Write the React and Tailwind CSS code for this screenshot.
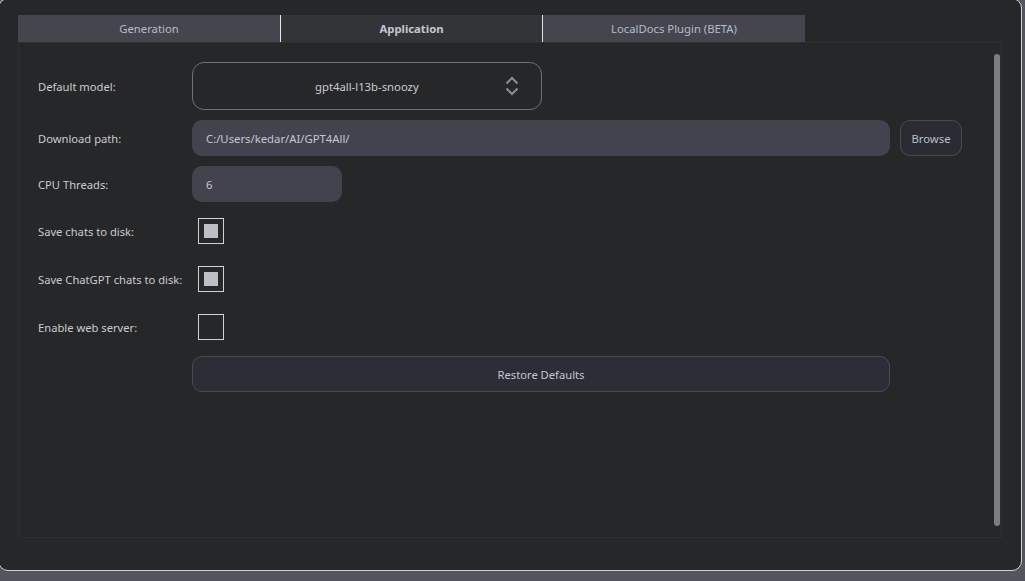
import React from 'react';

const Label = ({ children }) => (
  <div className="w-[154px] shrink-0 whitespace-nowrap pt-[2px] text-[11.2px] text-[#c9ccd1]">{children}</div>
);

const CheckRow = ({ label, checked }) => (
  <div className="flex h-[38px] items-center">
    <Label>{label}</Label>
    <div className="ml-[6px] flex h-[26px] w-[26px] items-center justify-center border border-[#d0d2d6]">
      {checked && <div className="h-[14px] w-[14px] bg-[#bcbfc6]" />}
    </div>
  </div>
);

const tabClass = 'flex h-[27px] items-center justify-center pt-[2px] text-[11.3px]';

const App = () => {
  return (
    <div className="h-[581px] w-[1025px] overflow-hidden bg-[#55555f] font-['Noto_Sans',sans-serif]">
      <div className="-ml-[2px] -mt-[2px] h-[573px] w-[1024px] rounded-[10px] border border-[#d0d2d6] bg-[#262729] pl-[19px] pt-[16px]">
        {/* Tabs */}
        <div className="flex">
          <div className={`${tabClass} w-[262px] bg-[#44454f] text-[#b6bcc6]`}>Generation</div>
          <div className={`${tabClass} w-[262px] border-l border-[#e4e5e8] bg-[#333437] font-bold text-[#c3c8d0]`}>Application</div>
          <div className={`${tabClass} w-[263px] border-l border-[#e4e5e8] bg-[#44454f] text-[#b6bcc6]`}>LocalDocs Plugin (BETA)</div>
        </div>

        {/* Settings panel */}
        <div className="flex h-[496px] w-[984px] border border-[#2d2e33]">
          <div className="flex-1 pl-[19px] pt-[19px]">
            <div className="flex flex-col gap-[10px]">
              <div className="flex items-center">
                <Label>Default model:</Label>
                <div className="flex h-[48px] w-[350px] items-center rounded-[12px] border border-[#6f7078] pl-[122px] pr-[22px] text-[11.3px] text-[#c9ccd1]">
                  <span className="pt-[2px]">gpt4all-l13b-snoozy</span>
                  <svg className="ml-auto" width="14" height="20" viewBox="0 0 14 20" fill="none" stroke="#8c8d92" strokeWidth="2">
                    <path d="M1.5 7.5 7 2l5.5 5.5" />
                    <path d="M1.5 12.5 7 18l5.5-5.5" />
                  </svg>
                </div>
              </div>

              <div className="flex items-center">
                <Label>Download path:</Label>
                <div className="flex h-[36px] w-[698px] items-center rounded-[10px] bg-[#42434f] pl-[14px] pt-[2px] text-[11.3px] text-[#c3c8d0]">
                  C:/Users/kedar/AI/GPT4All/
                </div>
                <button className="ml-[10px] h-[36px] w-[62px] rounded-[10px] border border-[#494a54] bg-[#2a2b33] pt-[2px] text-[11.3px] text-[#b6c0cc]">
                  Browse
                </button>
              </div>

              <div className="flex items-center">
                <Label>CPU Threads:</Label>
                <div className="flex h-[36px] w-[150px] items-center rounded-[10px] bg-[#42434f] pl-[14px] pt-[2px] text-[11.3px] text-[#c3c8d0]">
                  6
                </div>
              </div>

              <CheckRow label="Save chats to disk:" checked />
              <CheckRow label="Save ChatGPT chats to disk:" checked />
              <CheckRow label="Enable web server:" />

              <div className="flex">
                <div className="w-[154px] shrink-0" />
                <button className="h-[36px] w-[698px] rounded-[10px] border border-[#494a54] bg-[#2c2d36] pt-[2px] text-[11.2px] text-[#c3c8d0]">
                  Restore Defaults
                </button>
              </div>
            </div>
          </div>

          {/* Scrollbar */}
          <div className="mb-[11px] mr-[1px] mt-[11px] w-[6px] rounded-[3px] bg-[#7c7e7e]" />
        </div>
      </div>
    </div>
  );
};

export default App;
